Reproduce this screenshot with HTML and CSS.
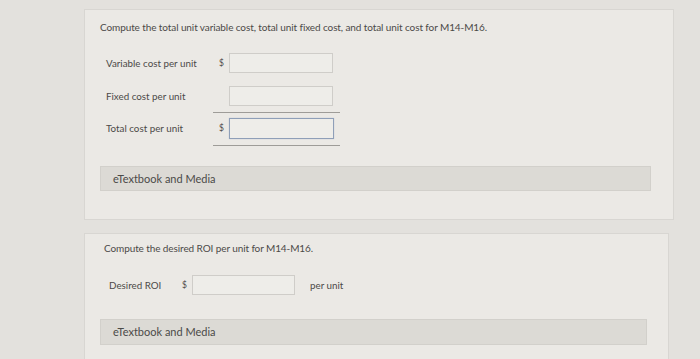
FILE: index.html
```html
<!DOCTYPE html>
<html>
<head>
    <meta charset="utf-8">
    <title>Cost per unit</title>
    <link rel="stylesheet" href="styles.css">
</head>
<body>
    <div class="card card-one">
        <p class="question">Compute the total unit variable cost, total unit fixed cost, and total unit cost for M14-M16.</p>
        <div class="costs">
            <div class="row first">
                <span class="label">Variable cost per unit</span>
                <div class="cell"><span class="cur">$</span><span class="box"></span></div>
            </div>
            <div class="row second">
                <span class="label">Fixed cost per unit</span>
                <div class="cell ruled"><span class="cur"></span><span class="box"></span></div>
            </div>
            <div class="row third">
                <span class="label">Total cost per unit</span>
                <div class="cell ruled"><span class="cur">$</span><span class="box active"></span></div>
            </div>
        </div>
        <div class="media">eTextbook and Media</div>
    </div>

    <div class="card card-two">
        <p class="question">Compute the desired ROI per unit for M14-M16.</p>
        <div class="roi">
            <span class="label">Desired ROI</span>
            <span class="cur">$</span>
            <span class="box"></span>
            <span class="unit">per unit</span>
        </div>
        <div class="media">eTextbook and Media</div>
    </div>
</body>
</html>
```

FILE: styles.css
```css
body{
    margin:0;
    padding:9px 0 0 84px;
    background-color:#e3e1dd;
    font-family:Lato, "Liberation Sans", sans-serif;
    color:#4b4a48;
    height:359px;
    box-sizing:border-box;
    overflow:hidden;
}
.card{
    background-color:#ebe9e5;
    border:1px solid #d8d6d2;
    box-sizing:border-box;
    padding:0 0 0 15px;
}
.card-one{
    width:590px;
    height:211px;
    padding-top:10px;
}
.card-two{
    width:585px;
    height:140px;
    margin-top:13px;
    padding-top:7px;
}
.question{
    margin:0;
    font-size:10px;
    line-height:14px;
    letter-spacing:-0.1px;
}
.card-two .question{
    padding-left:4px;
}

/* cost rows */
.costs{
    margin-top:19px;
    padding-left:6px;
}
.row{
    display:flex;
    align-items:flex-start;
}
.first{ height:33px; }
.second{ height:32px; }
.third{ height:28px; }
.label{
    font-size:9.8px;
    line-height:20px;
    width:107px;
}
.cell{
    display:flex;
    align-items:flex-start;
    width:127px;
    box-sizing:border-box;
}
.ruled{
    border-bottom:1px solid #9e9c98;
}
.second .cell{ height:27px; }
.third .cell{ height:28px; }
.cur{
    font-size:8.5px;
    line-height:20px;
    width:16px;
    padding-left:6px;
    box-sizing:border-box;
}
.box{
    display:block;
    width:104px;
    height:20px;
    background-color:#eeede9;
    border:1px solid #cfcdc9;
    box-sizing:border-box;
}
.box.active{
    width:105px;
    height:21px;
    border:1px solid #8f9fb8;
    box-shadow:0 0 1px #b8c4d6;
}

/* eTextbook bar */
.media{
    width:551px;
    height:25px;
    background-color:#dcdad5;
    border:1px solid #d2d0cb;
    box-sizing:border-box;
    font-size:11px;
    line-height:23px;
    padding-left:12px;
}
.card-one .media{
    margin-top:20px;
}
.card-two .media{
    width:547px;
    height:26px;
    margin-top:24px;
    line-height:24px;
}

/* desired ROI */
.roi{
    display:flex;
    align-items:center;
    margin-top:20px;
    padding-left:9px;
    height:20px;
}
.roi .label{
    width:73px;
}
.roi .cur{
    padding-left:0;
    width:10px;
}
.roi .box{
    width:103px;
}
.unit{
    font-size:9.8px;
    margin-left:15px;
}
```
